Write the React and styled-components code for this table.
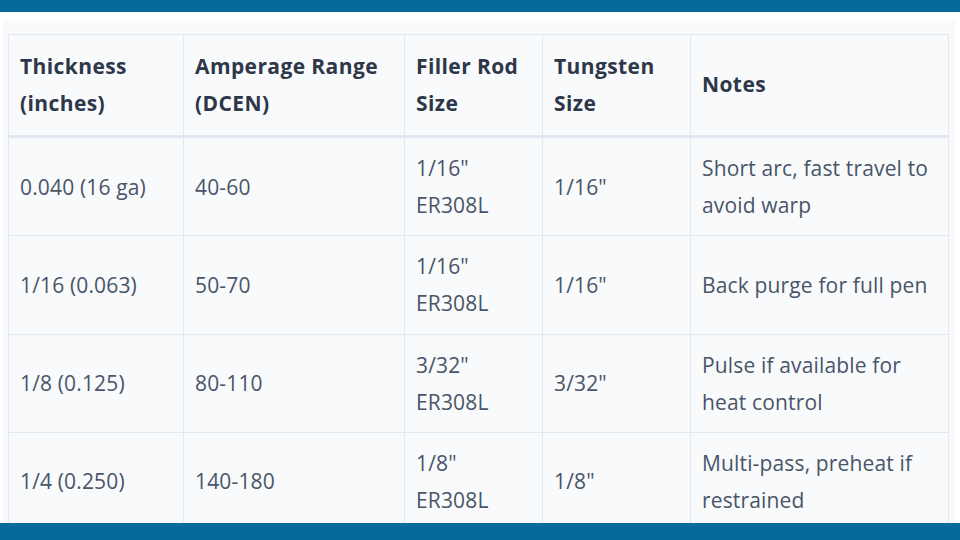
import React from "react";
import styled, { createGlobalStyle } from "styled-components";

const Global = createGlobalStyle`
  html, body { margin: 0; padding: 0; background: #ffffff; }
  body { font-family: "Open Sans", "Noto Sans", sans-serif; }
`;

const Frame = styled.div`
  width: 960px;
  height: 540px;
  display: flex;
  flex-direction: column;
  overflow: hidden;
  background: #ffffff;
`;

const Bar = styled.div`
  flex: 0 0 ${(p) => p.$h}px;
  background: #076a9b;
`;

const Content = styled.div`
  flex: 1;
  overflow: hidden;
  padding: 9px 5px 0 3px;
`;

const Card = styled.div`
  background: #f9fafb;
  padding: 13px 7px 0 5px;
  height: 100%;
  box-sizing: border-box;
`;

const Table = styled.table`
  width: 940px;
  border-collapse: collapse;
  table-layout: fixed;
  background: #f8fafc;
  border: 1px solid #e2e8f0;
`;

const Th = styled.th`
  text-align: left;
  font-weight: 700;
  font-size: 21px;
  line-height: 37px;
  color: #2d3748;
  padding: 12.5px 11px 13.5px;
  border-right: 1px solid #e2e8f0;
  border-bottom: 3px solid #e2e8f0;
  vertical-align: middle;
  letter-spacing: 0.4px;
`;

const Td = styled.td`
  font-size: 21px;
  line-height: 37px;
  color: #4a5568;
  padding: 12px 11px 11.3px;
  border-right: 1px solid #e2e8f0;
  border-bottom: 1px solid #e2e8f0;
  vertical-align: middle;
  letter-spacing: 0.15px;
`;

const cols = [175, 221, 138, 148, 258];
const headers = [
  ["Thickness", "(inches)"],
  ["Amperage Range", "(DCEN)"],
  ["Filler Rod", "Size"],
  ["Tungsten", "Size"],
  ["Notes"],
];

const rows = [
  ["0.040 (16 ga)", "40-60", ["1/16\"", "ER308L"], "1/16\"", ["Short arc, fast travel to", "avoid warp"]],
  ["1/16 (0.063)", "50-70", ["1/16\"", "ER308L"], "1/16\"", ["Back purge for full pen"]],
  ["1/8 (0.125)", "80-110", ["3/32\"", "ER308L"], "3/32\"", ["Pulse if available for", "heat control"]],
  ["1/4 (0.250)", "140-180", ["1/8\"", "ER308L"], "1/8\"", ["Multi-pass, preheat if", "restrained"]],
];

const Lines = ({ v }) =>
  Array.isArray(v)
    ? v.map((l, i) => (
        <React.Fragment key={i}>
          {i > 0 && <br />}
          {l}
        </React.Fragment>
      ))
    : v;

export default function App() {
  return (
    <>
      <Global />
      <Frame>
        <Bar $h={12} />
        <Content>
          <Card>
            <Table>
              <colgroup>
                {cols.map((w, i) => (
                  <col key={i} style={{ width: w }} />
                ))}
              </colgroup>
              <thead>
                <tr>
                  {headers.map((h, i) => (
                    <Th key={i}>
                      <Lines v={h} />
                    </Th>
                  ))}
                </tr>
              </thead>
              <tbody>
                {rows.map((r, i) => (
                  <tr key={i}>
                    {r.map((c, j) => (
                      <Td key={j}>
                        <Lines v={c} />
                      </Td>
                    ))}
                  </tr>
                ))}
              </tbody>
            </Table>
          </Card>
        </Content>
        <Bar $h={17} />
      </Frame>
    </>
  );
}
